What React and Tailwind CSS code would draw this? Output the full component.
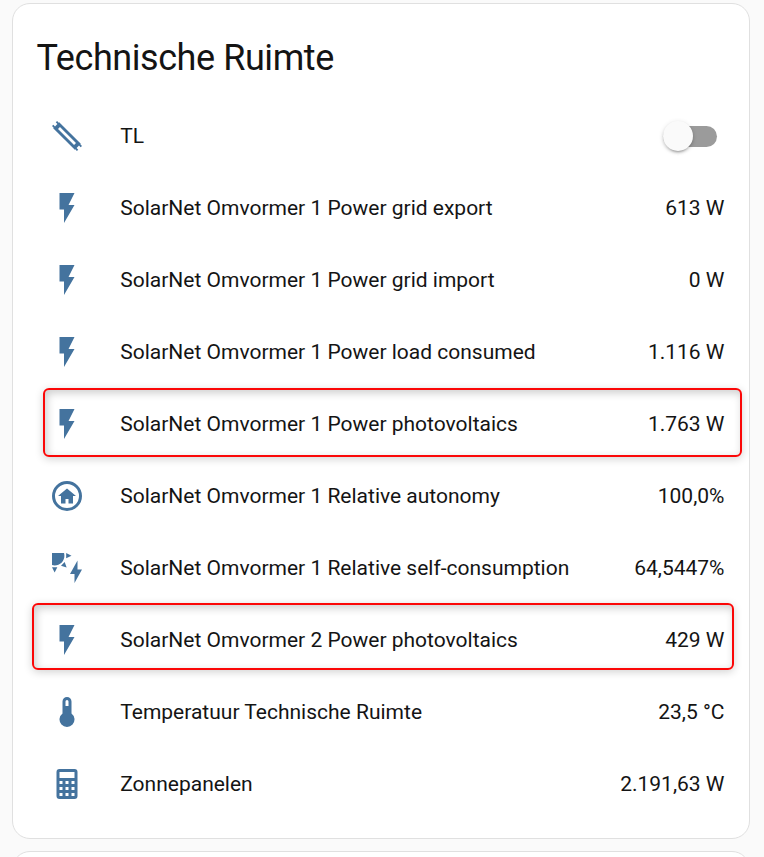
const icons = {
  tube: "M6.8,2.8L21.2,17.2L20.9,17.5L22,18.6L21.1,19.5L20,18.4L18.4,20L19.5,21.1L18.6,22L17.5,20.9L17.2,21.2L2.8,6.8L3.1,6.5L2,5.4L2.9,4.5L4,5.6L5.6,4L4.5,2.9L5.4,2L6.5,3.1L6.8,2.8M7.3,6L6,7.3L16.7,18L18,16.7L7.3,6Z",
  flash: "M7,2V13H10V22L17,10H13L17,2H7Z",
  home: "M12,20A8,8 0 0,1 4,12A8,8 0 0,1 12,4A8,8 0 0,1 20,12A8,8 0 0,1 12,20M12,2A10,10 0 0,0 2,12A10,10 0 0,0 12,22A10,10 0 0,0 22,12A10,10 0 0,0 12,2M11,14H13V17H16V12H18L12,7L6,12H8V17H11V14Z",
  solar: "M11.45,2V5.55L15,3.77L11.45,2M10.45,8L8,10.46L11.75,11.71L10.45,8M2,11.45L3.77,15L5.55,11.45H2M10,2H2V10C2.57,10.17 3.17,10.25 3.77,10.25C7.35,10.26 10.26,7.35 10.27,3.75C10.26,3.16 10.17,2.57 10,2M17,22V16H14L19,7V13H22L17,22Z",
  thermometer: "M15,13V5A3,3 0 0,0 9,5V13A5,5 0 1,0 15,13M12,4A1,1 0 0,1 13,5V8H11V5A1,1 0 0,1 12,4Z",
  calculator: "M7,2H17A2,2 0 0,1 19,4V20A2,2 0 0,1 17,22H7A2,2 0 0,1 5,20V4A2,2 0 0,1 7,2M7,4V8H17V4H7M7,10V12H9V10H7M11,10V12H13V10H11M15,10V12H17V10H15M7,14V16H9V14H7M11,14V16H13V14H11M15,14V16H17V14H15M7,18V20H9V18H7M11,18V20H13V18H11M15,18V20H17V18H15Z",
};

const rows = [
  { icon: "tube", name: "TL", toggle: true },
  { icon: "flash", name: "SolarNet Omvormer 1 Power grid export", value: "613 W" },
  { icon: "flash", name: "SolarNet Omvormer 1 Power grid import", value: "0 W" },
  { icon: "flash", name: "SolarNet Omvormer 1 Power load consumed", value: "1.116 W" },
  {
    icon: "flash",
    name: "SolarNet Omvormer 1 Power photovoltaics",
    value: "1.763 W",
    mark: "left-[30px] top-0 h-[69px] w-[699px]",
  },
  { icon: "home", name: "SolarNet Omvormer 1 Relative autonomy", value: "100,0%" },
  { icon: "solar", name: "SolarNet Omvormer 1 Relative self-consumption", value: "64,5447%" },
  {
    icon: "flash",
    name: "SolarNet Omvormer 2 Power photovoltaics",
    value: "429 W",
    mark: "left-[19px] top-[-1px] h-[67px] w-[702px]",
  },
  { icon: "thermometer", name: "Temperatuur Technische Ruimte", value: "23,5 °C" },
  { icon: "calculator", name: "Zonnepanelen", value: "2.191,63 W" },
];

function Toggle() {
  return (
    <div className="mr-[7.5px] flex h-[30px] w-[54px] items-center">
      <div className="flex h-[21px] w-[54px] items-center rounded-full bg-[#9b9b9b]">
        <div className="size-[30px] shrink-0 rounded-full bg-[#fafafa] shadow-[0_4px_2px_-3px_rgba(0,0,0,0.2),0_2px_3px_rgba(0,0,0,0.14),0_1px_5px_rgba(0,0,0,0.12)]" />
      </div>
    </div>
  );
}

function Row({ icon, name, value, toggle, mark }) {
  return (
    <div className="relative flex h-[72px] items-center pr-[24.5px] pl-9">
      <svg viewBox="0 0 24 24" className="size-9 shrink-0 fill-[#44739e]" fillRule="evenodd">
        <path d={icons[icon]} />
      </svg>
      <span className="ml-[35.25px] flex-1 whitespace-nowrap">{name}</span>
      {toggle ? <Toggle /> : <span className="whitespace-nowrap">{value}</span>}
      {mark && (
        <div
          className={`absolute rounded-[6px] border-2 border-[#fb0707] shadow-[0_2px_8px_rgba(0,0,0,0.18),inset_2px_3px_8px_rgba(0,0,0,0.2)] ${mark}`}
        />
      )}
    </div>
  );
}

export default function App() {
  return (
    <main className="h-[857px] w-[764px] overflow-hidden bg-[#fafafa] pt-[3px] pl-3 font-['Roboto',sans-serif] text-[21px] leading-[30px] text-[#141414]">
      <section className="h-[836px] w-[738px] rounded-[18px] border border-[#e0e0e0] bg-white">
        <h1 className="flex h-24 items-center pt-3 pl-[23.5px] text-[36px] leading-[48px] tracking-[-0.43px]">
          Technische Ruimte
        </h1>
        {rows.map((row) => (
          <Row key={row.name} {...row} />
        ))}
      </section>

      {/* Top edge of the next card */}
      <section className="mt-3 h-20 w-[738px] rounded-[18px] border border-[#e0e0e0] bg-white" />
    </main>
  );
}
